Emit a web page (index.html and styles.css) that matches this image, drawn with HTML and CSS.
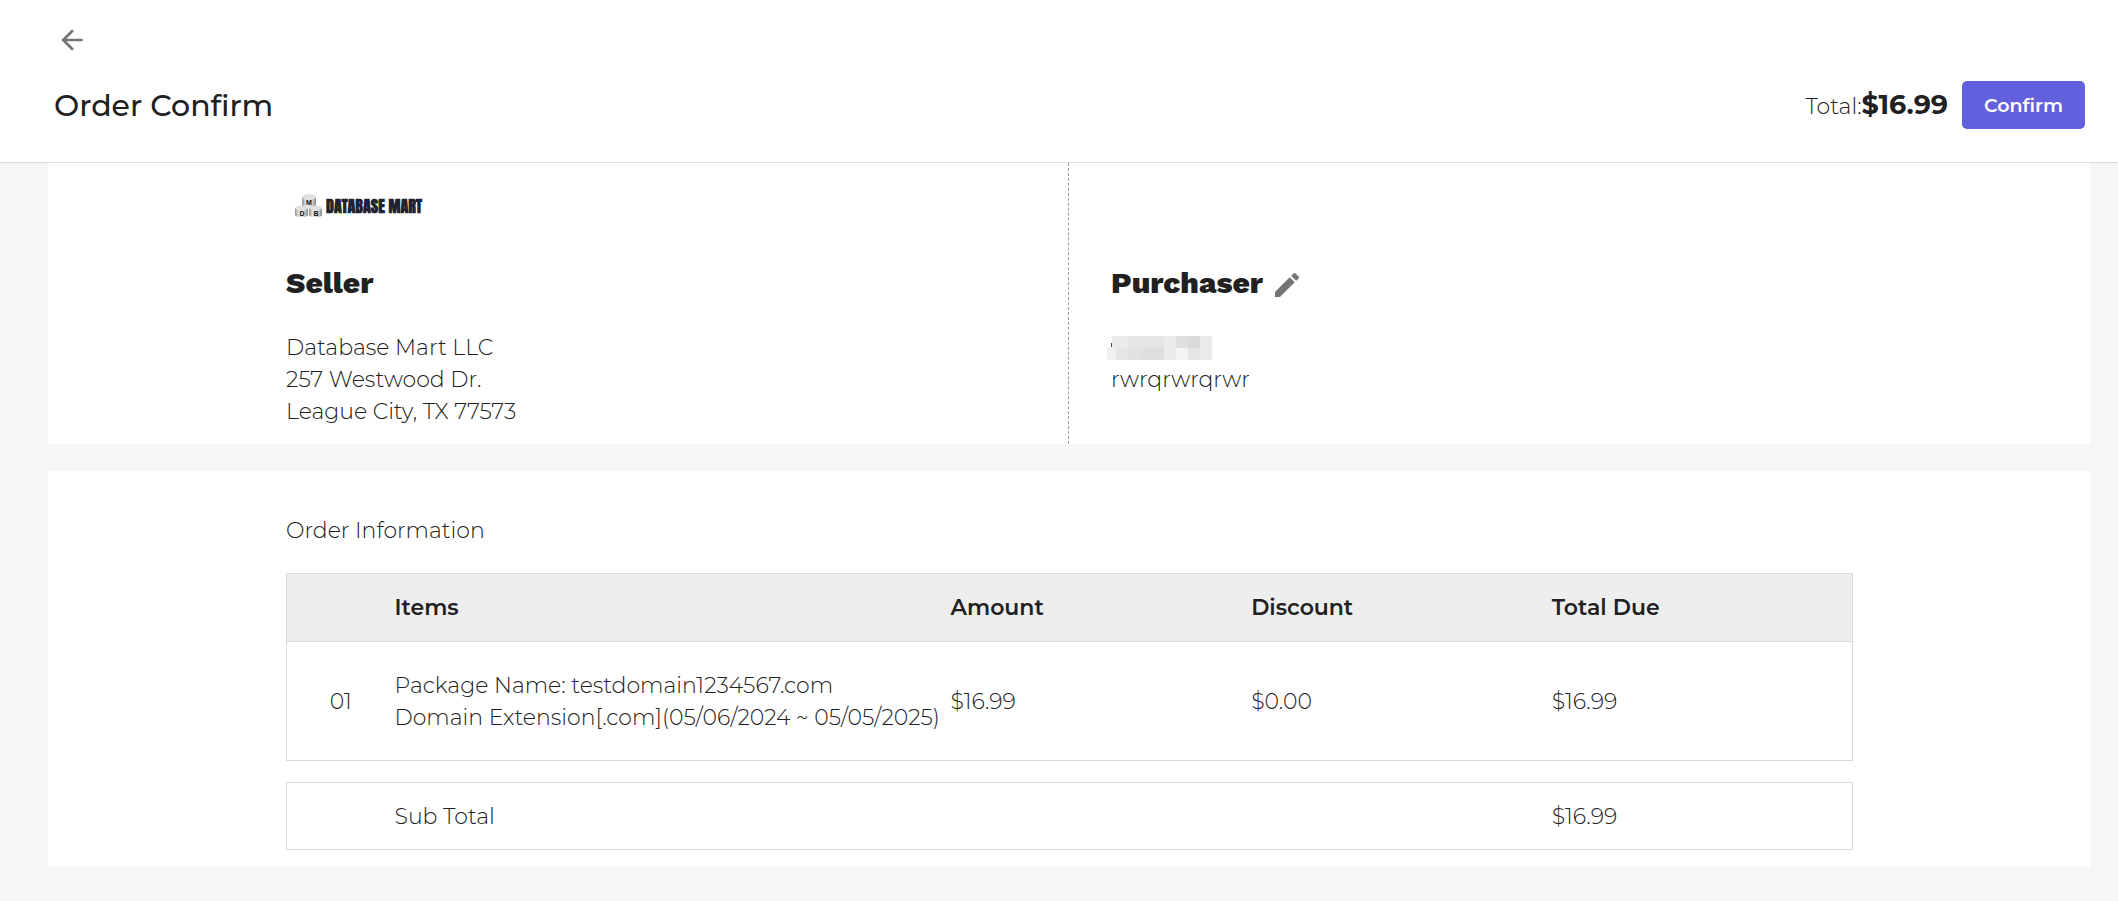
FILE: index.html
```html
<!DOCTYPE html>
<html lang="en">
<head>
  <meta charset="UTF-8" />
  <meta name="viewport" content="width=device-width, initial-scale=1.0"/>
  <title>Order Confirm</title>
  <link rel="stylesheet" href="styles.css">
</head>
<body>
  <header class="page-header">
    <a class="back-link" href="#" aria-label="Back">
      <svg class="icon" viewBox="0 0 24 24"><path d="M20 11H7.83l5.59-5.59L12 4l-8 8 8 8 1.41-1.41L7.83 13H20v-2z"/></svg>
    </a>
    <div class="header-row">
      <h1>Order Confirm</h1>
      <div class="header-actions">
        <p class="total">Total:<strong>$16.99</strong></p>
        <button type="button" class="confirm-btn">Confirm</button>
      </div>
    </div>
  </header>

  <main>
    <!-- Seller / Purchaser -->
    <section class="card parties">
      <div class="party seller">
        <div class="logo">
          <svg class="logo-mark" viewBox="0 0 28 26">
            <defs>
              <linearGradient id="drum" x1="0" x2="1">
                <stop offset="0" stop-color="#8f8f8f"/>
                <stop offset="0.3" stop-color="#ededed"/>
                <stop offset="0.75" stop-color="#cfcfcf"/>
                <stop offset="1" stop-color="#858585"/>
              </linearGradient>
            </defs>
            <g fill="url(#drum)">
              <path d="M7 4v8c0 3 14 3 14 0V4z"/>
              <path d="M0 15v7c0 3 13 3 13 0v-7z"/>
              <path d="M14 15v7c0 3 13 3 13 0v-7z"/>
            </g>
            <g fill="#e0e0e0">
              <ellipse cx="14" cy="4" rx="7" ry="3"/>
              <ellipse cx="6.5" cy="15" rx="6.5" ry="2.5"/>
              <ellipse cx="20.5" cy="15" rx="6.5" ry="2.5"/>
            </g>
            <g class="logo-letters">
              <text x="14" y="12">M</text>
              <text x="7" y="23">D</text>
              <text x="21" y="23">B</text>
            </g>
          </svg>
          <span class="logo-text">DATABASE MART</span>
        </div>
        <h2>Seller</h2>
        <address>
          Database Mart LLC<br>
          257 Westwood Dr.<br>
          League City, TX 77573
        </address>
      </div>
      <div class="party purchaser">
        <div class="logo"></div>
        <h2>Purchaser
          <button type="button" class="edit-btn" aria-label="Edit purchaser">
            <svg class="icon" viewBox="0 0 24 24"><path d="M3 17.25V21h3.75L17.81 9.94l-3.75-3.75L3 17.25zM20.71 7.04c.39-.39.39-1.02 0-1.41l-2.34-2.34c-.39-.39-1.02-.39-1.41 0l-1.83 1.83 3.75 3.75 1.83-1.83z"/></svg>
          </button>
        </h2>
        <address>
          <svg class="masked-name" viewBox="0 0 105 24" shape-rendering="crispEdges">
            <path fill="#ebebeb" d="M3 0h102v24H9V12H3z"/>
            <path fill="#f1f1f1" d="M0 12h9v12H0z"/>
            <path fill="#e5e5e5" d="M21 0h36v12H21zM9 12h12v12H9zM81 12h12v12H81z"/>
            <path fill="#dfdfdf" d="M69 0h12v12H69zM33 12h24v12H33z"/>
            <path fill="#e2e2e2" d="M21 12h12v12H21z"/>
            <path fill="#dadada" d="M81 0h12v12H81z"/>
            <path fill="#f4f4f4" d="M69 12h12v12H69z"/>
            <path fill="#fff" d="M3 0h2v11H3z"/>
            <path fill="#444" d="M4 7h1v4H4z"/>
          </svg>
          rwrqrwrqrwr
        </address>
      </div>
    </section>

    <!-- Order table -->
    <section class="card order">
      <h3>Order Information</h3>
      <table class="items">
        <colgroup>
          <col class="col-no"><col><col class="col-money"><col class="col-money"><col class="col-money">
        </colgroup>
        <thead>
          <tr>
            <th></th>
            <th>Items</th>
            <th>Amount</th>
            <th>Discount</th>
            <th>Total Due</th>
          </tr>
        </thead>
        <tbody>
          <tr>
            <td class="no">01</td>
            <td>Package Name: testdomain1234567.com<br>Domain Extension[.com](05/06/2024 ~ 05/05/2025)</td>
            <td>$16.99</td>
            <td>$0.00</td>
            <td>$16.99</td>
          </tr>
        </tbody>
      </table>
      <table class="items subtotal">
        <colgroup>
          <col class="col-no"><col><col class="col-money"><col class="col-money"><col class="col-money">
        </colgroup>
        <tbody>
          <tr>
            <td></td>
            <td colspan="3">Sub Total</td>
            <td>$16.99</td>
          </tr>
        </tbody>
      </table>
    </section>
  </main>
</body>
</html>
```
FILE: styles.css
```css
* {
  box-sizing: border-box;
}

body {
  margin: 0;
  background-color: #f6f6f6;
  color: #212121;
  font-family: Montserrat, Inter, sans-serif;
  font-size: 22px;
  font-weight: 300;
  line-height: 32px;
}

h1, h2, h3, p {
  margin: 0;
}

.icon {
  display: block;
  width: 32px;
  height: 32px;
  fill: #757575;
}

/* Header */
.page-header {
  background-color: #fff;
  border-bottom: 1px solid #dcdcdc;
  padding: 24px 33px 33px 54px;
}

.back-link {
  display: block;
  width: 32px;
  margin: 0 0 25px 2px;
}

.header-row {
  display: flex;
  justify-content: space-between;
  align-items: center;
}

h1 {
  padding-top: 2px;
  font-size: 30px;
  font-weight: 500;
}

.header-actions {
  display: flex;
  align-items: center;
  gap: 14px;
}

.total {
  padding-top: 2px;
}

.total strong {
  font-size: 27px;
  font-weight: 700;
}

.confirm-btn {
  height: 48px;
  padding: 0 22px;
  border: none;
  border-radius: 5px;
  background-color: #6360de;
  color: #fff;
  font-family: inherit;
  font-size: 19px;
  font-weight: 600;
  cursor: pointer;
}

/* Cards */
main {
  padding: 0 28px 35px 48px;
}

.card {
  background-color: #fff;
}

.parties {
  display: grid;
  grid-template-columns: 1fr 1fr;
  margin-bottom: 27px;
}

.party {
  padding: 29px 42px 16px;
}

.seller {
  padding-left: 238px;
  border-right: 1px dashed #999;
}

.logo {
  display: flex;
  align-items: center;
  gap: 3px;
  height: 28px;
  margin-bottom: 47px;
  padding-left: 9px;
}

.logo-mark {
  width: 28px;
  height: 26px;
}

.logo-letters {
  font-family: "Liberation Sans", sans-serif;
  font-size: 7px;
  font-weight: 700;
  text-anchor: middle;
  fill: #111;
}

.logo-text {
  color: #22232f;
  font-family: Anton, Impact, "Liberation Sans Narrow", "Liberation Sans", sans-serif;
  font-size: 16px;
  font-weight: 700;
  white-space: nowrap;
}

h2 {
  display: flex;
  align-items: center;
  gap: 8px;
  height: 32px;
  margin-bottom: 33px;
  font-family: "Work Sans", Inter, sans-serif;
  font-size: 30px;
  font-weight: 800;
}

.edit-btn {
  padding: 4px 0 0;
  border: none;
  background: none;
  cursor: pointer;
}

address {
  display: flow-root;
  font-style: normal;
}

.masked-name {
  display: block;
  width: 105px;
  height: 24px;
  margin: 4px 0 4px -4px;
}

/* Order table */
.order {
  padding: 44px 237px 17px 238px;
}

h3 {
  margin-bottom: 26px;
  font-size: 22px;
  font-weight: 300;
}

.items {
  width: 100%;
  table-layout: fixed;
  border-collapse: collapse;
  border: 1px solid #d9d9d9;
}

.col-no {
  width: 108px;
}

.col-money {
  width: 19.2%;
}

.items th {
  height: 68px;
  padding: 0;
  border-bottom: 1px solid #d9d9d9;
  background-color: #eee;
  font-weight: 600;
  text-align: left;
}

.items td {
  height: 119px;
  padding: 2px 0 0;
  white-space: nowrap;
}

.items .no {
  text-align: center;
}

.subtotal {
  margin-top: 21px;
}

.subtotal td {
  height: 67px;
}
```
